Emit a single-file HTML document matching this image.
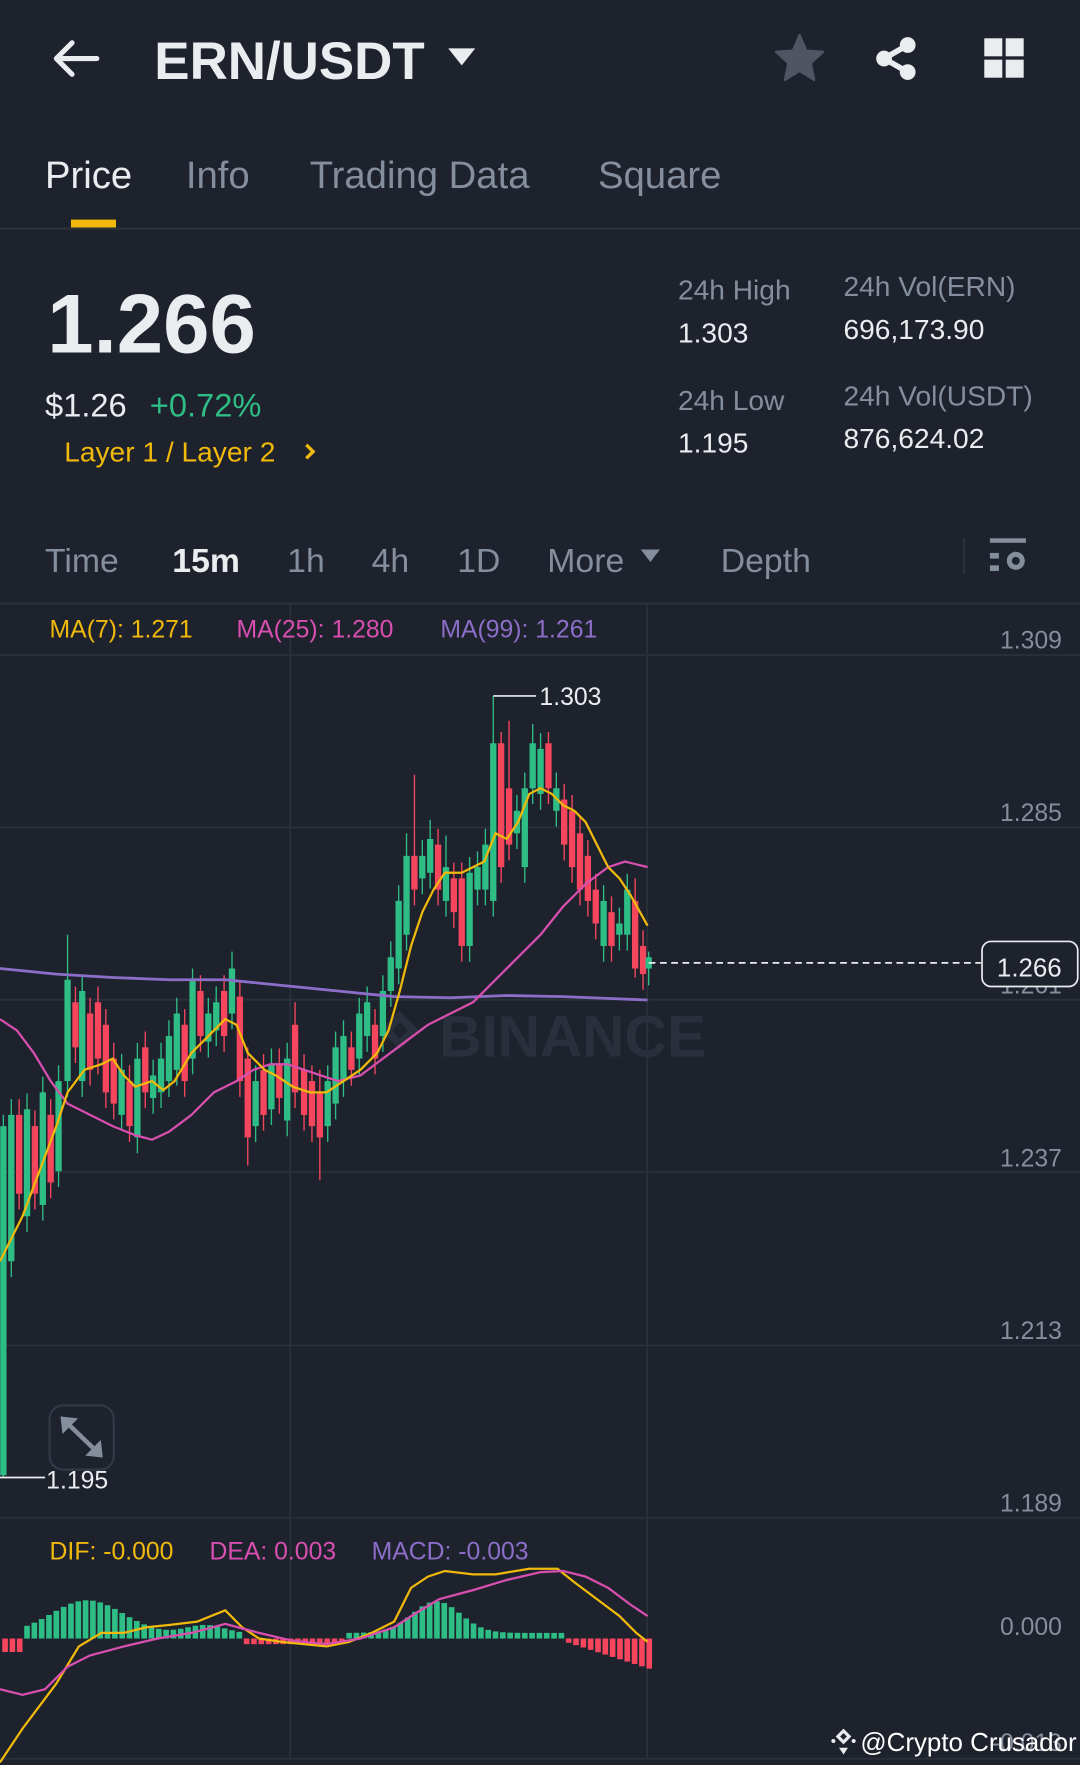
<!DOCTYPE html>
<html><head><meta charset="utf-8"><style>
html,body{margin:0;padding:0;background:#1e222d;width:1080px;height:1765px;overflow:hidden}
svg{display:block}
text{font-family:"Liberation Sans","DejaVu Sans",sans-serif}
</style></head><body>
<svg id="s" width="1080" height="1765" viewBox="0 0 959 1567.3" preserveAspectRatio="none" xmlns="http://www.w3.org/2000/svg">
<rect width="959" height="1567.3" fill="#1e222d"/>
<!-- header -->
<g stroke="#eaecef" stroke-width="4.5" fill="none" stroke-linecap="round" stroke-linejoin="round">
<path d="M50 52 H86 M64 38 L50 52 L64 66"/>
</g>
<text x="137" y="70" font-size="47" font-weight="bold" fill="#eaecef">ERN/USDT</text>
<path d="M398 43 H422 L410 58 Z" fill="#eaecef"/>
<path d="M710 31 L716 45 L731 46 L720 56 L723 71 L710 63 L697 71 L700 56 L689 46 L704 45 Z" fill="#4f5563" stroke="#4f5563" stroke-width="2" stroke-linejoin="round"/>
<g fill="#eaecef"><circle cx="785" cy="52" r="7"/><circle cx="806" cy="40" r="7"/><circle cx="806" cy="64" r="7"/></g>
<path d="M785 52 L806 40 M785 52 L806 64" stroke="#eaecef" stroke-width="5"/>
<g fill="#eaecef"><rect x="874" y="34" width="16" height="16"/><rect x="893" y="34" width="16" height="16"/><rect x="874" y="53" width="16" height="16"/><rect x="893" y="53" width="16" height="16"/></g>
<!-- tabs -->
<g font-size="34">
<text x="40" y="167" fill="#eaecef">Price</text>
<text x="165" y="167" fill="#848e9c">Info</text>
<text x="275" y="167" fill="#848e9c">Trading Data</text>
<text x="531" y="167" fill="#848e9c">Square</text>
</g>
<rect x="63" y="195" width="40" height="7" fill="#f0b90b"/>
<rect x="0" y="202" width="959" height="2" fill="#2b3139"/>
<!-- price -->
<text x="42" y="313" font-size="74" font-weight="bold" fill="#eaecef">1.266</text>
<text x="40" y="370" font-size="29" fill="#eaecef">$1.26</text>
<text x="133" y="370" font-size="29" fill="#2ebd85">+0.72%</text>
<text x="57" y="410" font-size="25" fill="#f0b90b">Layer 1 / Layer 2</text>
<path d="M272 395 L278 401 L272 407" stroke="#f0b90b" stroke-width="3" fill="none"/>
<g font-size="25">
<text x="602" y="266" fill="#848e9c">24h High</text>
<text x="602" y="304" fill="#eaecef">1.303</text>
<text x="602" y="364" fill="#848e9c">24h Low</text>
<text x="602" y="402" fill="#eaecef">1.195</text>
<text x="749" y="263" fill="#848e9c">24h Vol(ERN)</text>
<text x="749" y="301" fill="#eaecef">696,173.90</text>
<text x="749" y="360" fill="#848e9c">24h Vol(USDT)</text>
<text x="749" y="398" fill="#eaecef">876,624.02</text>
</g>
<!-- time row -->
<g font-size="30" fill="#848e9c">
<text x="40" y="508">Time</text>
<text x="153" y="508" fill="#eaecef" font-weight="bold">15m</text>
<text x="255" y="508">1h</text>
<text x="330" y="508">4h</text>
<text x="406" y="508">1D</text>
<text x="486" y="508">More</text>
<text x="640" y="508">Depth</text>
</g>
<path d="M569 488 H586 L577.5 499 Z" fill="#848e9c"/>
<rect x="855" y="478" width="2" height="32" fill="#2b3139"/>
<g fill="#848e9c"><rect x="879" y="478" width="32" height="4"/><rect x="879" y="491" width="8" height="5"/><rect x="879" y="502" width="8" height="5"/><circle cx="902" cy="498" r="8"/></g>
<circle cx="902" cy="498" r="3.5" fill="#1e222d"/>
<rect x="0" y="535" width="959" height="2" fill="#2b3139"/>
<!-- grid -->
<g fill="#2b3139">
<rect x="0" y="581" width="959" height="1.5"/><rect x="0" y="734" width="959" height="1.5"/>
<rect x="0" y="887" width="959" height="1.5"/><rect x="0" y="1040" width="959" height="1.5"/>
<rect x="0" y="1194" width="959" height="1.5"/><rect x="0" y="1347" width="959" height="1.5"/>
<rect x="0" y="1561" width="959" height="1.5"/>
<rect x="257" y="537" width="1.5" height="1025"/><rect x="574" y="537" width="1.5" height="1025"/>
</g>
<text x="390" y="938" font-size="52" font-weight="bold" fill="#2a303b">BINANCE</text>
<path d="M355 898 L372 915 L355 932 L338 915 Z M355 908 L362 915 L355 922 L348 915 Z" fill="#2a303b" fill-rule="evenodd"/>
<g font-size="22" fill="#848e9c" text-anchor="end">
<text x="943" y="576">1.309</text><text x="943" y="729">1.285</text><text x="943" y="882">1.261</text>
<text x="943" y="1036">1.237</text><text x="943" y="1189">1.213</text><text x="943" y="1342">1.189</text>
<text x="943" y="1452">0.000</text><text x="943" y="1555">-0.013</text>
</g>
<g font-size="22">
<text x="44" y="566" fill="#f0b90b">MA(7): 1.271</text>
<text x="210" y="566" fill="#d84fb0">MA(25): 1.280</text>
<text x="391" y="566" fill="#8c6ec9">MA(99): 1.261</text>
<text x="44" y="1385" fill="#f0b90b">DIF: -0.000</text>
<text x="186" y="1385" fill="#d84fb0">DEA: 0.003</text>
<text x="330" y="1385" fill="#8c6ec9">MACD: -0.003</text>
</g>
<g id="cand"></g>
<g id="hist"></g>
<polyline fill="none" stroke="#8c6ec9" stroke-width="2.5" points="0,860 50,865 100,868 150,870 200,870 250,875 300,880 350,885 400,886 450,884 500,885 550,887 575,888"/>
<polyline fill="none" stroke="#d84fb0" stroke-width="2" points="0,905 15,915 30,935 45,960 60,980 80,990 100,1000 120,1008 135,1012 150,1005 170,990 190,970 210,960 225,950 240,945 255,945 270,950 285,955 300,960 320,955 340,940 360,925 380,910 400,900 420,890 440,870 460,850 480,830 500,805 520,785 540,770 555,765 575,770"/>
<polyline fill="none" stroke="#f0b90b" stroke-width="2" points="0,1120 10,1100 20,1080 35,1040 50,1000 60,970 75,950 90,945 100,940 110,955 120,965 135,960 145,968 155,960 170,935 185,920 200,905 210,910 220,935 235,950 245,955 260,965 275,970 290,970 305,960 320,950 335,935 345,915 355,880 365,840 375,810 385,790 395,775 410,775 420,770 430,765 440,740 450,745 460,730 470,705 480,700 490,705 500,715 510,720 520,730 530,750 540,770 550,780 560,795 575,822"/>
<polyline fill="none" stroke="#f0b90b" stroke-width="2" points="0,1565 20,1535 50,1495 70,1462 90,1450 110,1450 130,1445 150,1443 175,1440 200,1430 215,1445 230,1455 250,1458 270,1460 290,1462 310,1458 330,1450 350,1440 365,1410 380,1400 395,1395 420,1398 440,1398 470,1393 495,1393 510,1405 530,1420 550,1435 565,1450 575,1458"/>
<polyline fill="none" stroke="#d84fb0" stroke-width="2" points="0,1500 20,1505 40,1500 60,1480 80,1470 110,1462 140,1455 170,1450 200,1442 230,1450 260,1457 290,1460 320,1455 350,1445 370,1432 390,1420 420,1412 450,1403 480,1396 500,1395 520,1400 540,1410 560,1425 575,1435"/>
<!-- markers -->
<path d="M438 618 H476" stroke="#eaecef" stroke-width="1.5"/>
<text x="479" y="626" font-size="22" fill="#eaecef">1.303</text>
<path d="M0 1312 H40" stroke="#eaecef" stroke-width="1.5"/>
<text x="41" y="1322" font-size="22" fill="#eaecef">1.195</text>
<path d="M576 855 H871" stroke="#eaecef" stroke-width="1.5" stroke-dasharray="6 4"/>
<rect x="872" y="836" width="85" height="40" rx="8" fill="#1e222d" stroke="#eaecef" stroke-width="1.5"/>
<text x="914" y="867" font-size="23" fill="#eaecef" text-anchor="middle">1.266</text>
<rect x="44" y="1248" width="57" height="57" rx="12" fill="#1e222d" stroke="#323845" stroke-width="2"/>
<path d="M56 1260 L65 1261 L57 1269 Z M89 1292 L80 1291 L88 1283 Z M59 1263 L86 1289" stroke="#848e9c" stroke-width="4" fill="#848e9c"/>
<path d="M749 1535 L756 1542 L749 1549 L742 1542 Z M749 1539 L752 1542 L749 1545 L746 1542 Z" fill="#eaecef" fill-rule="evenodd"/>
<circle cx="740" cy="1546" r="1.8" fill="#eaecef"/><circle cx="758" cy="1546" r="1.8" fill="#eaecef"/><path d="M745 1552 L749 1558 L753 1552Z" fill="#eaecef"/>
<text x="764" y="1555" font-size="23" fill="#ffffff">@Crypto Crusador</text>
</svg>
<script>
var G="#2ebd85",R="#f6465d";
var d=[[3,1000,1310,G,990,1312],[10,990,1120,G],[17,990,1060,R],[24,985,1080,G],[31,1000,1060,R],[38,970,1070,G],[45,990,1050,R],[52,960,1040,G],[60,870,960,G,830],[67,890,930,R],[73,880,960,G],[80,900,950,R],[87,890,940,R],[94,910,970,R],[101,940,980,R],[108,950,990,G],[115,960,1000,R],[122,940,1010,G],[129,930,970,R],[136,955,975,G],[143,940,970,G],[150,920,960,G],[157,900,950,G],[164,910,960,R],[171,870,940,G,860],[178,880,920,R],[185,900,925,G],[192,890,915,G],[199,880,920,R],[206,860,900,G,845],[213,885,960,R],[220,940,1010,R,930,1035],[227,960,1000,G],[234,950,990,R],[241,945,985,G],[248,945,975,R],[255,940,995,G],[262,910,970,R,890],[270,950,990,R],[277,960,1000,R],[284,970,1010,R,950,1048],[291,960,1000,G],[298,930,980,G],[305,920,960,G],[312,930,950,R],[319,900,940,G],[326,890,920,G],[333,910,940,R],[340,880,920,G],[347,850,880,G],[354,800,860,G],[361,760,830,G,740],[368,760,790,R,688],[375,760,780,G],[382,745,775,G,728],[389,750,790,R],[396,770,800,G,742],[403,780,810,R],[410,780,840,R],[417,775,840,G],[424,770,790,G],[431,750,790,G],[438,660,800,G,618],[445,660,770,R,650],[452,700,750,R,640],[459,720,740,G],[466,700,770,G],[473,660,700,G,643],[480,665,705,G],[487,660,700,R,650],[494,700,720,G],[501,710,750,R],[508,720,770,R],[515,740,790,R],[522,760,800,R],[529,790,820,R],[536,800,840,G],[543,810,840,R],[550,820,830,G],[557,790,830,G],[564,800,860,R,780,868],[571,840,865,R],[576,850,860,G,845,875]];
var h="";d.forEach(function(c){var wt=c[4]||c[1]-14,wb=c[5]||c[2]+14;h+='<rect x="'+(c[0]-0.6)+'" y="'+wt+'" width="1.2" height="'+(wb-wt)+'" fill="'+c[3]+'"/><rect x="'+(c[0]-2.8)+'" y="'+c[1]+'" width="5.6" height="'+(c[2]-c[1])+'" fill="'+c[3]+'"/>';});
document.getElementById("cand").innerHTML=h;
var b="";for(var x=2;x<578;x+=6.5){var v;
if(x<20)v=-12;else if(x<215)v=30*Math.exp(-Math.pow((x-75)/45,2))+8*Math.exp(-Math.pow((x-180)/25,2))+4;
else if(x<305)v=-5;else if(x<500)v=28*Math.exp(-Math.pow((x-385)/30,2))+5;else v=-(x-500)/78*25-3;
var y0=1455;var col=v>=0?G:R;var y=v>=0?y0-v:y0,hh=Math.abs(v);
b+='<rect x="'+x+'" y="'+y+'" width="5" height="'+hh+'" fill="'+col+'"/>';}
document.getElementById("hist").innerHTML=b;
</script>
</body></html>
